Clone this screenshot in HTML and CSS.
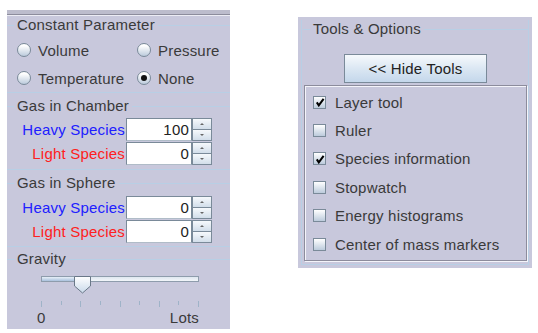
FILE: index.html
```html
<!DOCTYPE html>
<html lang="en">
<head>
  <meta charset="UTF-8">
  <title>Controls</title>
  <link rel="stylesheet" href="styles.css">
</head>
<body>

<div class="page">

  <div class="controls">

    <div class="group first">
      <div class="group-title">Constant Parameter</div>
      <div class="radios">
        <label class="radio"><span class="dot"></span>Volume</label>
        <label class="radio"><span class="dot"></span>Pressure</label>
        <label class="radio"><span class="dot"></span>Temperature</label>
        <label class="radio"><span class="dot on"></span>None</label>
      </div>
    </div>

    <div class="group">
      <div class="group-title">Gas in Chamber</div>
      <div class="spin-rows">
        <div class="spin-row">
          <span class="lbl heavy">Heavy Species</span>
          <span class="field">100</span>
          <span class="arrows"><span class="up"></span><span class="down"></span></span>
        </div>
        <div class="spin-row">
          <span class="lbl light">Light Species</span>
          <span class="field">0</span>
          <span class="arrows"><span class="up"></span><span class="down"></span></span>
        </div>
      </div>
    </div>

    <div class="group">
      <div class="group-title">Gas in Sphere</div>
      <div class="spin-rows">
        <div class="spin-row">
          <span class="lbl heavy">Heavy Species</span>
          <span class="field">0</span>
          <span class="arrows"><span class="up"></span><span class="down"></span></span>
        </div>
        <div class="spin-row">
          <span class="lbl light">Light Species</span>
          <span class="field">0</span>
          <span class="arrows"><span class="up"></span><span class="down"></span></span>
        </div>
      </div>
    </div>

    <div class="group last">
      <div class="group-title">Gravity</div>
      <div class="slider">
        <div class="track"><div class="fill" style="width: 41px"></div></div>
        <svg class="thumb" width="19" height="19" viewBox="0 0 19 19">
          <defs>
            <linearGradient id="tg" x1="0" y1="0" x2="0" y2="1">
              <stop offset="0" stop-color="#ffffff"/>
              <stop offset="1" stop-color="#c9d9ea"/>
            </linearGradient>
          </defs>
          <path d="M1.5 1.5 H17.5 V11 L9.5 18 L1.5 11 Z" fill="url(#tg)" stroke="#6a7888" stroke-width="1"/>
        </svg>
      </div>
      <div class="ticks">
        <span class="big"></span><span></span><span class="big"></span><span></span><span class="big"></span><span></span><span class="big"></span><span></span><span class="big"></span>
      </div>
      <div class="scale"><span>0</span><span>Lots</span></div>
    </div>

  </div>

  <div class="tools">
    <div class="tools-box">
      <div class="group-title">Tools &amp; Options</div>
      <div class="btn-row"><button class="hide-btn">&lt;&lt; Hide Tools</button></div>
      <div class="checks">
        <div class="check"><span class="box"><svg width="10" height="10" viewBox="0 0 10 10"><path d="M1.8 5.4 L3.8 8.4 L8.6 1.8" fill="none" stroke="#000" stroke-width="2"/></svg></span>Layer tool</div>
        <div class="check"><span class="box"></span>Ruler</div>
        <div class="check"><span class="box"><svg width="10" height="10" viewBox="0 0 10 10"><path d="M1.8 5.4 L3.8 8.4 L8.6 1.8" fill="none" stroke="#000" stroke-width="2"/></svg></span>Species information</div>
        <div class="check"><span class="box"></span>Stopwatch</div>
        <div class="check"><span class="box"></span>Energy histograms</div>
        <div class="check"><span class="box"></span>Center of mass markers</div>
      </div>
    </div>
  </div>

</div>

</body>
</html>
```

FILE: styles.css
```css
body {
  margin: 0;
  background: #fff;
  font-family: "Liberation Sans", Arial, sans-serif;
  font-size: 15px;
  letter-spacing: 0.2px;
  color: #3a3a3a;
}
.page { display: flex; align-items: flex-start; }

/* left control panel */
.controls {
  margin: 10px 0 0 7px;
  width: 223px;
  background: #c8c8dc;
  border-top: 4px solid #bcbccc;
  box-shadow: inset 0 1px 0 #8c8c9c, inset 0 2px 0 #ececf4;
  padding-top: 2px;
}
.group { border-bottom: 1px solid #b8cfe5; margin-top: 4px; }
.group.first { margin-top: 0; }
.group.last { border-bottom: none; padding-bottom: 3px; margin-top: 3px; }

.group-title {
  display: flex; align-items: center; gap: 3px;
  height: 18px; line-height: 18px;
}
.group-title::before { content: ""; width: 7px; height: 1px; background: #b8cfe5; }
.group-title::after { content: ""; flex: 1; height: 1px; background: #b8cfe5; }

.radios {
  display: grid; grid-template-columns: 120px 1fr;
  margin-top: 2px; padding-left: 10px;
}
.radio { display: flex; align-items: center; height: 28px; gap: 7px; }
.dot {
  width: 14px; height: 14px; border-radius: 50%; box-sizing: border-box;
  border: 1px solid #7a8a99;
  background: linear-gradient(#ffffff 15%, #bccbdc);
  display: flex; align-items: center; justify-content: center;
}
.dot.on::after { content: ""; width: 6px; height: 6px; border-radius: 50%; background: #111; }

.spin-rows { display: flex; flex-direction: column; gap: 1px; margin-top: 3px; padding-bottom: 4px; }
.group:nth-child(3) .spin-rows { margin-top: 4px; padding-bottom: 3px; }
.spin-row { display: grid; grid-template-columns: 119px 66px 20px; height: 23px; }
.lbl { text-align: right; line-height: 23px; padding-right: 1px; }
.heavy { color: #2020ff; }
.light { color: #ff2020; }
.field {
  background: #fff;
  border: 1px solid #7a8a99;
  border-bottom-color: #b0bcc8;
  text-align: right; padding-right: 2px;
  line-height: 21px; color: #222;
}
.arrows { display: flex; flex-direction: column; }
.arrows span {
  flex: 1; border: 1px solid #7a8a99;
  background: linear-gradient(#f6f9fc, #d2deea);
  display: flex; align-items: center; justify-content: center;
}
.arrows span + span { border-top: none; }
.arrows .up::after {
  content: ""; border: 2px solid transparent; border-bottom: 2px solid #666; border-top: none; width: 0;
}
.arrows .down::after {
  content: ""; border: 2px solid transparent; border-top: 2px solid #666; border-bottom: none; width: 0;
}

/* gravity slider */
.slider { position: relative; margin: 8px 0 0 34px; width: 158px; height: 18px; }
.track {
  margin-top: 7px; height: 6px;
  border: 1px solid #8e9cac; box-sizing: border-box;
  background: linear-gradient(#dfe7f0, #f2f6fa);
}
.fill { height: 100%; background: linear-gradient(#e8f0f8, #a9c1dd); }
.thumb { position: absolute; left: 32px; top: -1px; }
.ticks {
  display: flex; justify-content: space-between; align-items: flex-start;
  margin: 7px 0 0 34px; width: 158px; height: 6px;
}
.ticks span { width: 1px; height: 4px; background: #9fb3c8; }
.ticks span.big { height: 6px; }
.scale {
  display: flex; justify-content: space-between;
  margin: 3px 0 0 30px; width: 162px; line-height: 16px;
}

/* tools panel */
.tools {
  margin: 17px 0 0 68px;
  width: 234px;
  background: #c8c8dc;
  padding: 3px;
  box-sizing: border-box;
}
.tools-box {
  border: 1px solid #b8cfe5; border-top: none;
  padding: 0 1px 3px 2px;
}
.tools-box .group-title { margin-left: -1px; margin-right: -1px; }
.btn-row { display: flex; justify-content: center; margin-top: 16px; }
.hide-btn {
  width: 143px; height: 29px;
  border: 1px solid #7a8a99;
  background: linear-gradient(#f6f9fc, #dbe7f3 50%, #c4d7eb);
  font: inherit; letter-spacing: 0.2px; color: #222;
}
.checks {
  margin-top: 2px;
  border: 1px solid #8c8c9c;
  box-shadow: inset 1px 1px 0 #f4f4fa, 1px 1px 0 #f4f4fa;
  padding: 2px 0 2px 8px;
}
.check { display: flex; align-items: center; height: 28.4px; gap: 9px; }
.box {
  width: 13px; height: 13px; box-sizing: border-box;
  border: 1px solid #7a8a99;
  background: linear-gradient(#ffffff, #bccbdc);
  display: flex; align-items: center; justify-content: center;
}
```
